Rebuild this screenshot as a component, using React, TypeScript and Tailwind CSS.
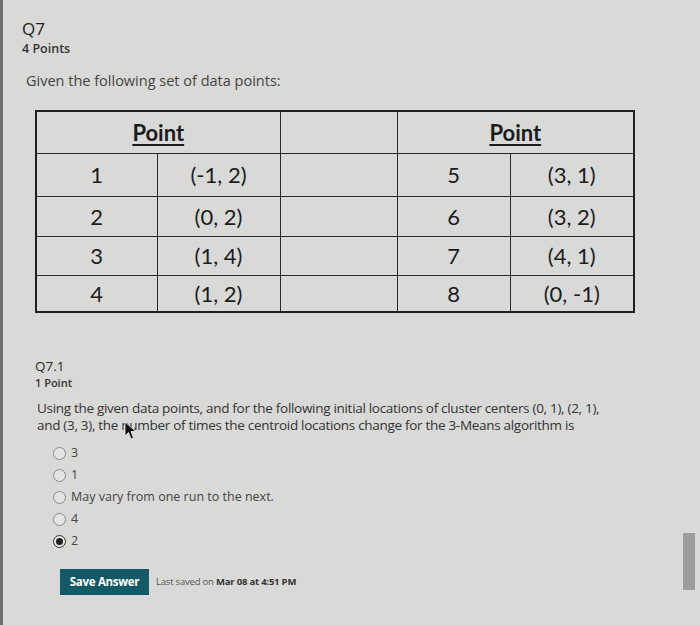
import React from "react";

const F = { fontFamily: '"Open Sans", "Noto Sans", sans-serif' } as React.CSSProperties;
const T = { fontFamily: 'Lato, "Open Sans", sans-serif' } as React.CSSProperties;

function Radio({ checked }: { checked?: boolean }) {
  return (
    <span
      className={
        "flex h-[13px] w-[13px] items-center justify-center rounded-full border bg-[#e4e4e2] " +
        (checked ? "border-[#333]" : "border-[#8a8a8a]")
      }
    >
      {checked && <span className="h-[7px] w-[7px] rounded-full bg-[#222]" />}
    </span>
  );
}

export default function App() {
  const rows = [
    ["1", "(-1, 2)", "5", "(3, 1)"],
    ["2", "(0, 2)", "6", "(3, 2)"],
    ["3", "(1, 4)", "7", "(4, 1)"],
    ["4", "(1, 2)", "8", "(0, -1)"],
  ];
  const heights = ["h-[43px]", "h-[40px]", "h-[39px]", "h-[37px]"];
  const options = ["3", "1", "May vary from one run to the next.", "4", "2"];
  return (
    <div
      className="relative h-[625px] w-[700px] overflow-hidden border-l-[3px] border-[#6e6e6c] bg-[#d9d9d7] text-[#2b2b2b]"
      style={F}
    >
      <div className="pl-[19px] pt-[18px]">
        <div className="text-[17px] leading-[22px] text-[#222]">Q7</div>
        <div className="text-[12.5px] font-semibold leading-[18px] text-[#333]">4 Points</div>
        <div className="ml-[4px] mt-[13px] text-[14.5px] leading-[20px] text-[#444]">
          Given the following set of data points:
        </div>

        <table
          className="ml-[13px] mt-[19px] w-[598px] table-fixed border-collapse border-[2px] border-[#1f1f1f] text-[22px] text-[#1c1c1c]"
          style={T}
        >
          <colgroup>
            <col className="w-[121px]" />
            <col className="w-[123px]" />
            <col className="w-[117px]" />
            <col className="w-[113px]" />
            <col className="w-[124px]" />
          </colgroup>
          <tbody>
            <tr className="h-[42px]">
              <td colSpan={2} className="border-[1.5px] border-[#2a2a2a] text-center font-bold">
                <span className="underline decoration-[2px] underline-offset-[3px]">Point</span>
              </td>
              <td className="border-[1.5px] border-[#2a2a2a]" />
              <td colSpan={2} className="border-[1.5px] border-[#2a2a2a] text-center font-bold">
                <span className="underline decoration-[2px] underline-offset-[3px]">Point</span>
              </td>
            </tr>
            {rows.map((r, i) => (
              <tr key={i} className={heights[i]}>
                <td className="border-[1.5px] border-[#2a2a2a] text-center">{r[0]}</td>
                <td className="border-[1.5px] border-[#2a2a2a] text-center">{r[1]}</td>
                <td className="border-[1.5px] border-[#2a2a2a]" />
                <td className="border-[1.5px] border-[#2a2a2a] text-center">{r[2]}</td>
                <td className="border-[1.5px] border-[#2a2a2a] text-center">{r[3]}</td>
              </tr>
            ))}
          </tbody>
        </table>

        <div className="ml-[13px] mt-[44px]">
          <div className="text-[13.5px] leading-[18px] text-[#2a2a2a]">Q7.1</div>
          <div className="text-[11px] font-semibold leading-[16px] text-[#333]">1 Point</div>
          <p className="ml-[2px] mt-[9px] whitespace-nowrap text-[13.5px] leading-[17px] tracking-[-0.3px] text-[#333]">
            Using the given data points, and for the following initial locations of cluster centers (0, 1), (2, 1),
            <br />
            and (3, 3), the number of times the centroid locations change for the 3-Means algorithm is
          </p>
          <div className="ml-[18px] mt-[8px] flex flex-col">
            {options.map((o, i) => (
              <label key={i} className="flex h-[22px] items-center gap-[5px] text-[12.5px] text-[#444]">
                <Radio checked={i === 4} />
                <span>{o}</span>
              </label>
            ))}
          </div>
          <div className="ml-[25px] mt-[17px] flex items-center gap-[7px]">
            <button className="h-[26px] w-[89px] bg-[#135a66] text-[11.5px] font-bold tracking-[-0.3px] text-white">
              Save Answer
            </button>
            <span className="text-[9.5px] tracking-[-0.2px] text-[#555]">
              Last saved on <span className="font-bold text-[#333]">Mar 08 at 4:51 PM</span>
            </span>
          </div>
        </div>
      </div>

      {/* scrollbar thumb */}
      <div className="absolute left-[680px] top-[533px] h-[57px] w-[12px] bg-[#9d9d9b]" />

      {/* mouse cursor */}
      <svg className="absolute left-[121px] top-[421px]" width="14" height="20" viewBox="0 0 14 20">
        <path d="M1 1 L1 15 L4.5 11.5 L7 18 L9.5 17 L7 10.5 L12 10.5 Z" fill="#111" stroke="#eee" strokeWidth="0.8" />
      </svg>
    </div>
  );
}
